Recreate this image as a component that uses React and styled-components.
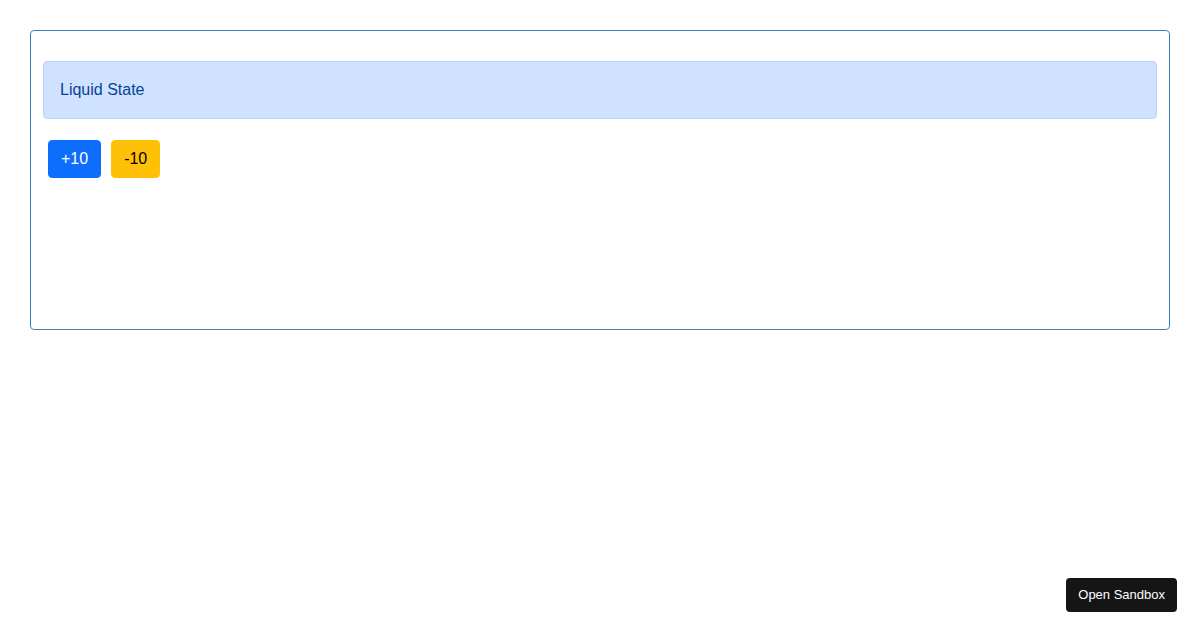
import React from "react";
import styled, { createGlobalStyle } from "styled-components";

const GlobalStyle = createGlobalStyle`
  body {
    margin: 0;
    font-family: "Liberation Sans", Arial, sans-serif;
    background: #fff;
  }
`;

const Panel = styled.div`
  margin: 30px;
  height: 300px;
  box-sizing: border-box;
  border: 1px solid #3a7fbf;
  border-radius: 4px;
  padding: 30px 12px;
`;

const Alert = styled.div`
  box-sizing: border-box;
  padding: 16px;
  margin-bottom: 16px;
  font-size: 16px;
  line-height: 24px;
  color: #084298;
  background: #cfe2ff;
  border: 1px solid #b6d4fe;
  border-radius: 4px;
`;

const Actions = styled.div`
  display: flex;
`;

const Button = styled.button`
  margin: 5px;
  padding: 6px 12px;
  font-family: inherit;
  font-size: 16px;
  line-height: 24px;
  border: 1px solid ${(p) => (p.$variant === "warning" ? "#ffc107" : "#0d6efd")};
  border-radius: 4px;
  background: ${(p) => (p.$variant === "warning" ? "#ffc107" : "#0d6efd")};
  color: ${(p) => (p.$variant === "warning" ? "#000" : "#fff")};
  cursor: pointer;
`;

const SandboxLink = styled.a`
  position: fixed;
  right: 23px;
  bottom: 18px;
  display: flex;
  align-items: center;
  height: 34px;
  box-sizing: border-box;
  padding: 0 12px 1px;
  font-size: 13px;
  color: #fff;
  background: #151515;
  border-radius: 4px;
  text-decoration: none;
`;

export default function App() {
  const [value, setValue] = React.useState(50);
  return (
    <>
      <GlobalStyle />
      <Panel>
        <Alert>Liquid State</Alert>
        <Actions>
          <Button onClick={() => setValue(value + 10)}>+10</Button>
          <Button $variant="warning" onClick={() => setValue(value - 10)}>
            -10
          </Button>
        </Actions>
      </Panel>
      <SandboxLink href="#">Open Sandbox</SandboxLink>
    </>
  );
}
